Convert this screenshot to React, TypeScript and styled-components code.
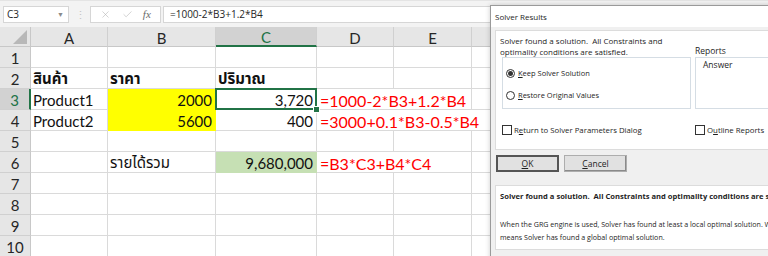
import React from "react";
import styled, { createGlobalStyle, css } from "styled-components";
import { X, Check } from "lucide-react";

const GlobalStyle = createGlobalStyle`
  html, body {
    margin: 0;
    padding: 0;
    background: #ffffff;
    overflow: hidden;
  }
`;

const GREEN = "#217346";
const GRID = "#dadada";

type CellData = {
  text?: string;
  right?: boolean;
  bold?: boolean;
  bg?: string;
  red?: boolean;
  span?: number;
  selected?: boolean;
};

const YELLOW = "#ffff00";
const LIGHT_GREEN = "#c6e0b4";

// A..F per row, spans swallow the following columns
const sheet: CellData[][] = [
  [],
  [{ text: "สินค้า", bold: true }, { text: "ราคา", bold: true }, { text: "ปริมาณ", bold: true }],
  [
    { text: "Product1" },
    { text: "2000", right: true, bg: YELLOW },
    { text: "3,720", right: true, selected: true },
    { text: "=1000-2*B3+1.2*B4", red: true, span: 2 },
  ],
  [
    { text: "Product2" },
    { text: "5600", right: true, bg: YELLOW },
    { text: "400", right: true },
    { text: "=3000+0.1*B3-0.5*B4", red: true, span: 3 },
  ],
  [],
  [
    {},
    { text: "รายได้รวม" },
    { text: "9,680,000", right: true, bg: LIGHT_GREEN },
    { text: "=B3*C3+B4*C4", red: true, span: 2 },
  ],
  [],
  [],
  [],
  [],
];

const columns = ["A", "B", "C", "D", "E", "F"];

const Screen = styled.div`
  position: relative;
  width: 768px;
  height: 256px;
  overflow: hidden;
  background: #ffffff;
  font-family: Lato, "Noto Sans Thai", "Noto Sans", sans-serif;
`;

const FormulaBar = styled.div`
  height: 27px;
  box-sizing: border-box;
  display: flex;
  align-items: center;
  padding-left: 3px;
  background: #f3f3f3;
  border-top: 1px solid #e4e4e4;
  font-family: "Open Sans", sans-serif;
  font-size: 10px;
  color: #262626;
`;

const FieldBox = styled.div<{ $width?: number }>`
  height: 17px;
  box-sizing: border-box;
  background: #ffffff;
  border: 1px solid #d6d6d6;
  display: flex;
  align-items: center;
  ${(p) =>
    p.$width
      ? css`
          width: ${p.$width}px;
          flex: none;
        `
      : css`
          flex: 1;
        `}
`;

const NameBox = styled(FieldBox)`
  justify-content: space-between;
  padding: 0 4px 0 3px;
`;

const Caret = styled.span`
  font-size: 7px;
  color: #8a8a8a;
`;

const Dots = styled.div`
  width: 21px;
  text-align: center;
  color: #c4c4c4;
  font-size: 11px;
  letter-spacing: -1px;
`;

const FxBox = styled(FieldBox)`
  justify-content: space-around;
  padding: 0 4px;
  color: #b0b0b0;
`;

const Fx = styled.span`
  font-family: "Liberation Serif", serif;
  font-style: italic;
  font-size: 11px;
  color: #6a6a6a;
`;

const FormulaInput = styled(FieldBox)`
  margin-left: 2px;
  padding-left: 6px;
`;

const Sheet = styled.div`
  display: grid;
  grid-template-columns: 31px 77px 108px 101px 77px 78px 1fr;
  grid-template-rows: 20px repeat(10, 21px);
  font-size: 15px;
  color: #111;
`;

const Corner = styled.div`
  box-sizing: border-box;
  background: #e6e6e6;
  border-right: 1px solid #c8c8c8;
  border-bottom: 1px solid #c8c8c8;
  display: flex;
  align-items: flex-end;
  justify-content: flex-end;
  padding: 0 3px 2px 0;

  &::after {
    content: "";
    width: 14px;
    height: 14px;
    background: #b8b8b8;
    clip-path: polygon(100% 0, 100% 100%, 0 100%);
  }
`;

const ColHead = styled.div<{ $active?: boolean }>`
  box-sizing: border-box;
  display: flex;
  align-items: center;
  justify-content: center;
  padding-top: 2px;
  background: ${(p) => (p.$active ? "#d2d2d2" : "#e6e6e6")};
  color: ${(p) => (p.$active ? GREEN : "#262626")};
  border-right: 1px solid #d0d0d0;
  border-bottom: ${(p) => (p.$active ? `2px solid ${GREEN}` : "1px solid #c8c8c8")};
`;

const RowHead = styled.div<{ $active?: boolean }>`
  box-sizing: border-box;
  display: flex;
  align-items: center;
  justify-content: center;
  padding-top: 2px;
  background: ${(p) => (p.$active ? "#d2d2d2" : "#e6e6e6")};
  color: ${(p) => (p.$active ? GREEN : "#262626")};
  border-bottom: 1px solid #d0d0d0;
  border-right: ${(p) => (p.$active ? `2px solid ${GREEN}` : "1px solid #c8c8c8")};
`;

const Cell = styled.div<{
  $right?: boolean;
  $bold?: boolean;
  $bg?: string;
  $red?: boolean;
  $span?: number;
  $selected?: boolean;
}>`
  position: relative;
  box-sizing: border-box;
  display: flex;
  align-items: center;
  justify-content: ${(p) => (p.$right ? "flex-end" : "flex-start")};
  padding: 2px 3px 0 ${(p) => (p.$red ? 3 : 2)}px;
  white-space: nowrap;
  background: ${(p) => p.$bg || "transparent"};
  border-right: 1px solid ${(p) => p.$bg || GRID};
  border-bottom: 1px solid ${(p) => p.$bg || GRID};
  font-weight: ${(p) => (p.$bold ? 700 : 400)};
  color: ${(p) => (p.$red ? "#ff0000" : "#111")};
  font-size: ${(p) => (p.$red ? "16px" : "15px")};
  grid-column: span ${(p) => p.$span || 1};

  ${(p) =>
    p.$selected &&
    css`
      &::after {
        content: "";
        position: absolute;
        inset: -1px -1px -1px -1px;
        border: 2px solid ${GREEN};
      }
      &::before {
        content: "";
        position: absolute;
        right: -4px;
        bottom: -4px;
        width: 5px;
        height: 5px;
        background: ${GREEN};
        border: 1px solid #fff;
        z-index: 1;
      }
    `}
`;

/* ---------- Solver dialog ---------- */

const Dialog = styled.div`
  position: absolute;
  left: 490px;
  top: 5px;
  width: 300px;
  height: 262px;
  box-sizing: border-box;
  background: #f0f0f0;
  border: 1px solid #9a9a9a;
  box-shadow: 0 0 5px rgba(0, 0, 0, 0.2);
  font-family: "Open Sans", sans-serif;
  color: #1e1e1e;
  display: flex;
  flex-direction: column;
`;

const TitleBar = styled.div`
  height: 21px;
  background: #ffffff;
  display: flex;
  align-items: center;
  padding-left: 4px;
  font-size: 8px;
`;

const DialogBody = styled.div`
  display: flex;
  flex-direction: column;
  padding: 3px 0 0 4px;
`;

const Panel = styled.div<{ $height: number }>`
  height: ${(p) => p.$height}px;
  box-sizing: border-box;
  background: #ffffff;
  border: 1px solid #dcdcdc;
  border-right: none;
`;

const UpperPanel = styled(Panel)`
  padding-left: 6px;
  display: grid;
  grid-template-columns: 189px 1fr;
  grid-template-rows: 26px 52px 1fr;
  column-gap: 4px;
`;

const Message = styled.div`
  margin-left: -2px;
  padding-top: 5px;
  font-size: 8px;
  line-height: 10.5px;
  white-space: nowrap;
`;

const ReportsLabel = styled.div`
  align-self: end;
  font-size: 8.5px;
  padding-bottom: 1px;
`;

const GroupBox = styled.div`
  box-sizing: border-box;
  border: 1px solid #d5dde4;
  display: flex;
  flex-direction: column;
`;

const RadioList = styled(GroupBox)`
  padding: 9px 0 0 3px;
  gap: 10px;
`;

const ReportList = styled(GroupBox)`
  padding: 1px 0 0 7px;
  font-size: 8.5px;
`;

const Option = styled.label`
  display: flex;
  align-items: center;
  gap: 3px;
  font-size: 7.5px;
  height: 12px;
`;

const Radio = styled.span<{ $checked?: boolean }>`
  width: 7px;
  height: 7px;
  border-radius: 50%;
  border: 1px solid #333;
  background: #fff;
  display: flex;
  align-items: center;
  justify-content: center;

  &::after {
    content: "";
    width: 5px;
    height: 5px;
    border-radius: 50%;
    background: ${(p) => (p.$checked ? "#333" : "transparent")};
  }
`;

const CheckOption = styled.label`
  align-self: center;
  display: flex;
  align-items: center;
  gap: 2px;
  font-size: 7.8px;
  margin-top: 2px;
  white-space: nowrap;
`;

const Checkbox = styled.span`
  width: 8px;
  height: 8px;
  border: 1px solid #333;
  background: #fff;
`;

const Key = styled.span`
  text-decoration: underline;
`;

const ButtonRow = styled.div`
  display: flex;
  gap: 5px;
  margin: 5px 0 13px 1px;
`;

const Button = styled.div<{ $default?: boolean }>`
  width: 63px;
  height: 17px;
  box-sizing: border-box;
  display: flex;
  align-items: center;
  justify-content: center;
  background: #e1e1e1;
  font-size: 8.5px;
  border: ${(p) => (p.$default ? "2px solid #555" : "1px solid #adadad")};
  box-shadow: ${(p) => (p.$default ? "none" : "inset -1px -1px 0 #8a8a8a")};
`;

const LowerPanel = styled(Panel)`
  padding: 4px 0 0 4px;
  white-space: nowrap;
  overflow: hidden;
`;

const Headline = styled.div`
  font-size: 7.6px;
  font-weight: 700;
  line-height: 12px;
`;

const Detail = styled.div`
  margin-top: 16px;
  font-size: 7.1px;
  line-height: 13px;
`;

function renderRow(cells: CellData[], rowIndex: number) {
  const out: React.ReactNode[] = [];
  let col = 0;
  while (col < columns.length) {
    const c = cells[col] || {};
    out.push(
      <Cell
        key={`${rowIndex}-${col}`}
        $right={c.right}
        $bold={c.bold}
        $bg={c.bg}
        $red={c.red}
        $span={c.span}
        $selected={c.selected}
      >
        {c.text}
      </Cell>
    );
    col += c.span || 1;
  }
  return out;
}

export default function App() {
  return (
    <Screen>
      <GlobalStyle />
      <FormulaBar>
        <NameBox $width={66}>
          <span>C3</span>
          <Caret>▼</Caret>
        </NameBox>
        <Dots>⋮</Dots>
        <FxBox $width={71}>
          <X size={11} strokeWidth={1.2} />
          <Check size={11} strokeWidth={1.2} />
          <Fx>fx</Fx>
        </FxBox>
        <FormulaInput>=1000-2*B3+1.2*B4</FormulaInput>
      </FormulaBar>

      <Sheet>
        <Corner />
        {columns.map((c) => (
          <ColHead key={c} $active={c === "C"}>
            {c}
          </ColHead>
        ))}
        {sheet.map((cells, i) => (
          <React.Fragment key={i}>
            <RowHead $active={i === 2}>{i + 1}</RowHead>
            {renderRow(cells, i)}
          </React.Fragment>
        ))}
      </Sheet>

      <Dialog>
        <TitleBar>Solver Results</TitleBar>
        <DialogBody>
          <UpperPanel $height={120}>
            <Message>
              Solver found a solution.&nbsp; All Constraints and
              <br />
              optimality conditions are satisfied.
            </Message>
            <ReportsLabel>Reports</ReportsLabel>
            <RadioList>
              <Option>
                <Radio $checked />
                <span>
                  <Key>K</Key>eep Solver Solution
                </span>
              </Option>
              <Option>
                <Radio />
                <span>
                  <Key>R</Key>estore Original Values
                </span>
              </Option>
            </RadioList>
            <ReportList>Answer</ReportList>
            <CheckOption>
              <Checkbox />
              <span>
                R<Key>e</Key>turn to Solver Parameters Dialog
              </span>
            </CheckOption>
            <CheckOption>
              <Checkbox />
              <span>
                O<Key>u</Key>tline Reports
              </span>
            </CheckOption>
          </UpperPanel>

          <ButtonRow>
            <Button $default>
              <span>
                <Key>O</Key>K
              </span>
            </Button>
            <Button>
              <span>
                <Key>C</Key>ancel
              </span>
            </Button>
          </ButtonRow>

          <LowerPanel $height={65}>
            <Headline>
              Solver found a solution.&nbsp; All Constraints and optimality conditions are satisfied.
            </Headline>
            <Detail>
              When the GRG engine is used, Solver has found at least a local optimal solution. When Simplex LP is used, this
              <br />
              means Solver has found a global optimal solution.
            </Detail>
          </LowerPanel>
        </DialogBody>
      </Dialog>
    </Screen>
  );
}
